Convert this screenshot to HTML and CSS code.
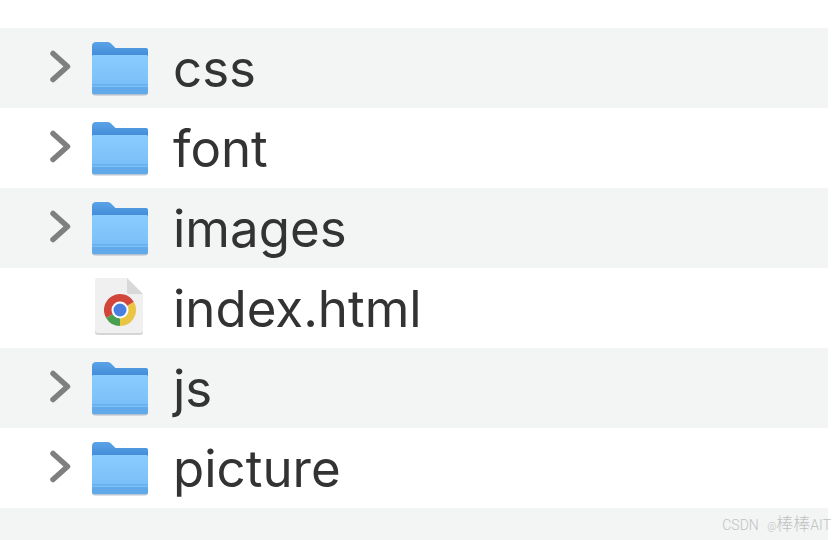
FILE: index.html
```html
<!DOCTYPE html>
<html>

<head>
  <title>files</title>
  <link rel="stylesheet" href="styles.css">
</head>

<body>
  <svg class="defs" width="0" height="0">
    <defs>
      <linearGradient id="folderBody" x1="0" y1="0" x2="0" y2="1">
        <stop offset="0" stop-color="#8accfd"/>
        <stop offset="1" stop-color="#74bbf7"/>
      </linearGradient>
      <linearGradient id="folderTab" x1="0" y1="0" x2="0" y2="1">
        <stop offset="0" stop-color="#5ba3e6"/>
        <stop offset="1" stop-color="#3b86d6"/>
      </linearGradient>
      <symbol id="folder" viewBox="0 0 60 56">
        <rect x="2" y="20" width="56" height="35.500" rx="3" fill="#4f6f8f" opacity=".4"/>
        <path d="M2 6c0-2.500 1.500-4 4-4h11c2 0 3 .6 4.500 2l4 4H56c1.300 0 2 .8 2 2v10H2z" fill="url(#folderTab)"/>
        <rect x="2" y="15" width="56" height="39" rx="1.500" fill="url(#folderBody)"/>
        <rect x="2" y="44" width="56" height="1.500" fill="#68afee"/>
        <path d="M2 47h56v5c0 1.300-.7 2-2 2H4c-1.300 0-2-.7-2-2z" fill="#62a9ea"/>
      </symbol>
      <symbol id="chevron" viewBox="0 0 24 34">
        <path d="M5 3.500L19.500 16.500 5 29.500" fill="none" stroke="#7f7f7f" stroke-width="5.500" stroke-linecap="round" stroke-linejoin="round"/>
      </symbol>
    </defs>
  </svg>

  <div class="file-list">
    <div class="file-row">
      <svg class="chevron"><use href="#chevron"/></svg>
      <svg class="folder"><use href="#folder"/></svg>
      <span class="file-name">css</span>
    </div>
    <div class="file-row">
      <svg class="chevron"><use href="#chevron"/></svg>
      <svg class="folder"><use href="#folder"/></svg>
      <span class="file-name">font</span>
    </div>
    <div class="file-row">
      <svg class="chevron"><use href="#chevron"/></svg>
      <svg class="folder"><use href="#folder"/></svg>
      <span class="file-name">images</span>
    </div>
    <div class="file-row">
      <span class="chevron"></span>
      <svg class="doc-icon" viewBox="0 0 60 66">
        <path d="M7 4h30l16 16v36c0 2-1 3-3 3H8c-2 0-3-1-3-3V6c0-1 1-2 2-2z" fill="#b9b9b9" opacity=".6" transform="translate(0 1)"/>
        <path d="M7 3h30l16 16v36c0 2-1 3-3 3H8c-2 0-3-1-3-3V5c0-1 1-2 2-2z" fill="#f0f0f0"/>
        <path d="M37 3l16 16H39c-1.300 0-2-.7-2-2z" fill="#d8d8d8"/>
        <path d="M30 35L16.140 43A16 16 0 0 1 43.860 27z" fill="#d2453a"/>
        <path d="M30 35L43.860 27A16 16 0 0 1 30 51z" fill="#eac443"/>
        <path d="M30 35L30 51A16 16 0 0 1 16.140 43z" fill="#4a9e50"/>
        <circle cx="30" cy="35" r="8.500" fill="#fff"/>
        <circle cx="30" cy="35" r="6.500" fill="#4a7fe0"/>
      </svg>
      <span class="file-name">index.html</span>
    </div>
    <div class="file-row">
      <svg class="chevron"><use href="#chevron"/></svg>
      <svg class="folder"><use href="#folder"/></svg>
      <span class="file-name">js</span>
    </div>
    <div class="file-row">
      <svg class="chevron"><use href="#chevron"/></svg>
      <svg class="folder"><use href="#folder"/></svg>
      <span class="file-name">picture</span>
    </div>
    <div class="file-row file-row-empty">
      <span class="watermark">CSDN <span class="watermark-at">@</span><span class="watermark-cjk">棒棒</span>AIT</span>
    </div>
  </div>
</body>

</html>
```

FILE: styles.css
```css
html,
body {
  height: 100%;
}

body {
  margin: 0;
  background-color: #fff;
  color: #333;
  font-family: Inter, "Noto Sans", "Noto Sans CJK SC", sans-serif;
  overflow: hidden;
}

.defs {
  display: block;
  height: 0;
}

.file-list {
  padding: 28px 12px 0 0;
}

.file-row {
  display: flex;
  align-items: center;
  height: 80px;
  padding-left: 48px;
}

.file-row:nth-child(odd) {
  background-color: #f3f5f5;
}

.file-row-empty {
  height: 32px;
  justify-content: flex-end;
  padding-left: 0;
  position: relative;
}

.chevron {
  width: 24px;
  height: 34px;
  margin-top: -2px;
  margin-right: 18px;
  flex: none;
  filter: blur(0.5px);
}

.folder {
  width: 60px;
  height: 56px;
  flex: none;
  margin-right: 23px;
  filter: blur(0.7px);
}

.doc-icon {
  width: 60px;
  height: 66px;
  flex: none;
  margin-right: 23px;
  filter: blur(0.6px);
}

.file-name {
  font-size: 51px;
  line-height: 80px;
  margin-top: 2px;
  color: #333;
  filter: blur(0.5px);
}

.watermark {
  position: absolute;
  right: -3px;
  top: 7px;
  font-family: Roboto, "Noto Sans CJK SC", sans-serif;
  font-size: 14px;
  font-weight: 300;
  line-height: 18px;
  word-spacing: 5px;
  color: #bfc1c1;
  white-space: nowrap;
}

.watermark-at {
  font-size: 10px;
}

.watermark-cjk {
  font-size: 17px;
  font-weight: 300;
}
```
